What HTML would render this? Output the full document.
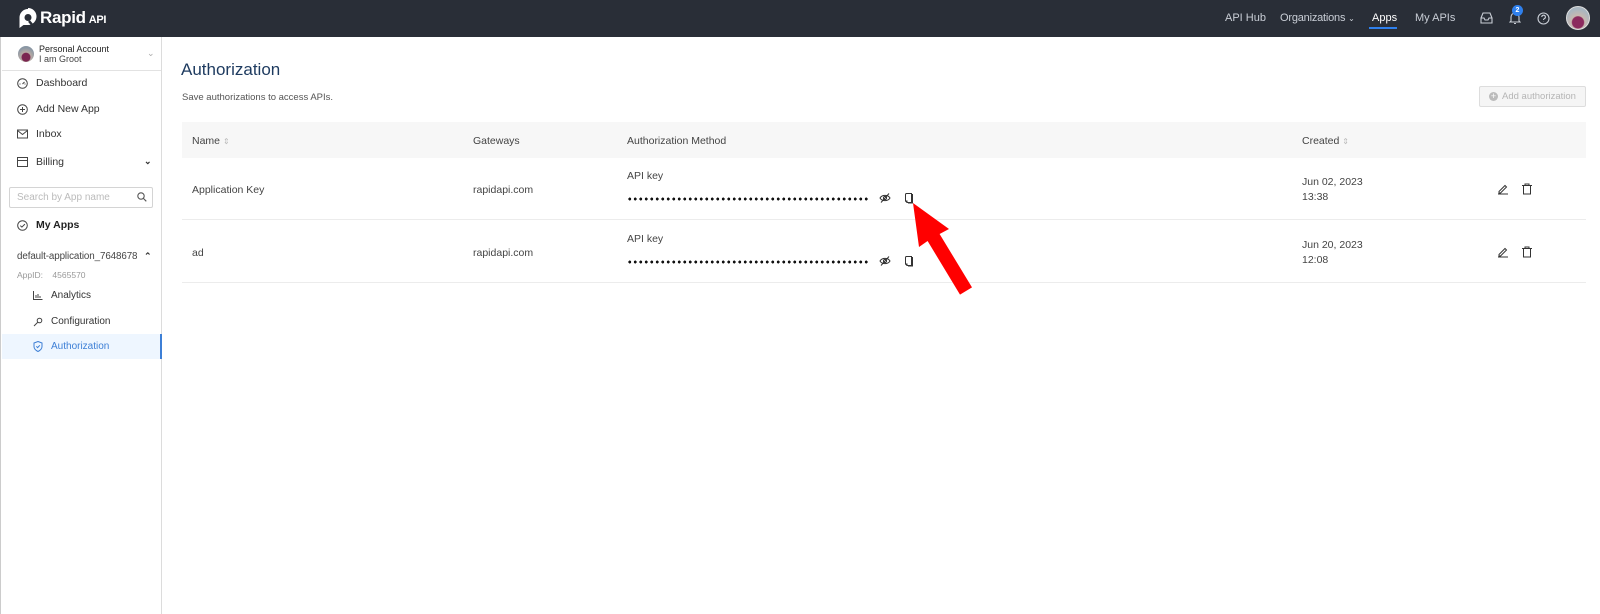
<!DOCTYPE html>
<html><head><meta charset="utf-8">
<style>
*{box-sizing:border-box;margin:0;padding:0}
body{width:1600px;height:614px;overflow:hidden;background:#fff;font-family:"Liberation Sans",sans-serif;color:#333;position:relative;font-size:11px}
.top{position:absolute;left:0;top:0;width:1600px;height:37px;background:#292e37}
.abs{position:absolute;white-space:nowrap}
.nav{color:#c9ced6;font-size:11px;top:12px}
.side{position:absolute;left:0;top:37px;width:162px;height:577px;border-right:1px solid #dcdcdc;border-left:1px solid #ccc}
.si{position:absolute;left:16px;font-size:10.5px;color:#333;display:flex;align-items:center;gap:8px}
.hdr{position:absolute;left:182px;top:122px;width:1404px;height:36px;background:#f7f7f7}
.line{position:absolute;left:182px;width:1404px;height:1px;background:#ececec}
.t{position:absolute;font-size:10.5px;color:#444;white-space:nowrap}
.dots{position:absolute;width:242px;height:4px;background:radial-gradient(circle,#111 1.3px,transparent 1.6px) 0 0/5.5px 4px repeat-x}
</style></head><body>
<div class="top"></div>
<svg class="abs" style="left:18px;top:8px" width="20" height="22" viewBox="0 0 20 22"><path d="M10 1a8.5 8.5 0 0 0-8.5 8.5V20l4-3h4.5a8.5 8.5 0 0 0 0-17z" fill="#fff"/><circle cx="10" cy="9.5" r="3.5" fill="#292e37"/><path d="M11 13l5 6" stroke="#292e37" stroke-width="2.5"/></svg>
<div class="abs" style="left:40px;top:8px;color:#fff;font-size:17px;font-weight:bold;letter-spacing:-0.3px">Rapid<span style="font-size:11px;margin-left:3px">API</span></div>
<div class="abs nav" style="left:1225px">API Hub</div>
<div class="abs nav" style="left:1280px;letter-spacing:-0.2px">Organizations <span style="font-size:8px">&#8964;</span></div>
<div class="abs nav" style="left:1372px;color:#fff">Apps</div>
<div class="abs" style="left:1369px;top:27px;width:28px;height:2px;background:#2f80ed"></div>
<div class="abs nav" style="left:1415px">My APIs</div>
<svg class="abs" style="left:1480px;top:12px" width="13" height="12" viewBox="0 0 13 12" fill="none" stroke="#c9ced6" stroke-width="1.1"><path d="M1 6l2-5h7l2 5v5H1z M1 6h3l1 2h3l1-2h3"/></svg>
<svg class="abs" style="left:1509px;top:11px" width="12" height="14" viewBox="0 0 12 14" fill="none" stroke="#c9ced6" stroke-width="1.1"><path d="M2 10V6a4 4 0 0 1 8 0v4l1 1H1z M5 12.5h2"/></svg>
<div class="abs" style="left:1512px;top:5px;width:11px;height:11px;border-radius:50%;background:#2f80ed;color:#fff;font-size:7px;text-align:center;line-height:11px;font-weight:bold">2</div>
<svg class="abs" style="left:1537px;top:12px" width="13" height="13" viewBox="0 0 13 13" fill="none" stroke="#c9ced6" stroke-width="1.1"><circle cx="6.5" cy="6.5" r="5.5"/><path d="M4.8 5a1.8 1.8 0 1 1 2.4 1.7c-.6.3-.7.7-.7 1.3M6.5 9.5v.3"/></svg>
<div class="abs" style="left:1566px;top:6px;width:24px;height:24px;border-radius:50%;background:radial-gradient(circle at 50% 70%,#8b2a5e 30%,#c8b8b0 35%,#a9b6c0 70%);border:1px solid #ddd"></div>

<div class="side">
<div class="abs" style="left:17px;top:9px;width:16px;height:16px;border-radius:50%;background:radial-gradient(circle at 50% 70%,#7a2550 30%,#b9aba4 35%,#8a97a4 70%)"></div>
<div class="abs" style="left:38px;top:7px;font-size:9px;color:#222">Personal Account</div>
<div class="abs" style="left:38px;top:17px;font-size:9px;color:#444">I am Groot</div>
<div class="abs" style="left:146px;top:11px;color:#aaa;font-size:9px">&#8964;</div>
<div class="abs" style="left:1px;top:33px;width:159px;height:1px;background:#e2e2e2"></div>
<div class="si" style="top:40px"><svg width="11" height="11" viewBox="0 0 11 11" fill="none" stroke="#444"><circle cx="5.5" cy="5.5" r="4.8"/><path d="M5.5 6l2-2M2.5 6h1M7.5 6h1"/></svg>Dashboard</div>
<div class="si" style="top:66px"><svg width="11" height="11" viewBox="0 0 11 11" fill="none" stroke="#444"><circle cx="5.5" cy="5.5" r="4.8"/><path d="M5.5 3v5M3 5.5h5"/></svg>Add New App</div>
<div class="si" style="top:91px"><svg width="11" height="10" viewBox="0 0 11 10" fill="none" stroke="#444"><rect x=".5" y="1" width="10" height="8"/><path d="M.5 1.5l5 4 5-4"/></svg>Inbox</div>
<div class="si" style="top:119px"><svg width="11" height="10" viewBox="0 0 11 10" fill="none" stroke="#444"><rect x=".5" y=".5" width="10" height="9"/><path d="M.5 3.5h10"/></svg>Billing</div>
<div class="abs" style="left:143px;top:119px;font-size:9px;font-weight:bold">&#8964;</div>
<div class="abs" style="left:8px;top:150px;width:144px;height:21px;border:1px solid #d4d4d4;border-radius:2px"></div>
<div class="abs" style="left:16px;top:155px;font-size:10px;color:#bbb">Search by App name</div>
<svg class="abs" style="left:136px;top:155px" width="10" height="10" viewBox="0 0 10 10" fill="none" stroke="#555" stroke-width="1.1"><circle cx="4" cy="4" r="3.2"/><path d="M6.4 6.4L9.3 9.3"/></svg>
<div class="si" style="top:182px;font-weight:bold;color:#222"><svg width="11" height="11" viewBox="0 0 11 11" fill="none" stroke="#444"><circle cx="5.5" cy="5.5" r="4.8"/><path d="M3.3 5.6l1.6 1.5 3-3"/></svg>My Apps</div>
<div class="abs" style="left:16px;top:214px;font-size:9.8px;color:#444;letter-spacing:-0.1px">default-application_7648678</div>
<div class="abs" style="left:143px;top:214px;font-size:9px;font-weight:bold">&#8963;</div>
<div class="abs" style="left:16px;top:233px;font-size:8.5px;color:#999">AppID: &nbsp;&nbsp;&nbsp;4565570</div>
<div class="si" style="left:32px;top:253px;font-size:10px"><svg width="10" height="9" viewBox="0 0 10 9" fill="none" stroke="#444"><path d="M.5 0v8.5h9M3 7V4M5 7V3M7 7V5"/></svg>Analytics</div>
<div class="si" style="left:32px;top:279px;font-size:10px"><svg width="10" height="10" viewBox="0 0 10 10" fill="none" stroke="#444"><circle cx="6.5" cy="3.5" r="2.3"/><path d="M5 5L1 9"/></svg>Configuration</div>
<div class="abs" style="left:1px;top:297px;width:160px;height:25px;background:#eef6ff;border-right:2px solid #3d7fd6"></div>
<div class="si" style="left:32px;top:304px;font-size:10px;color:#3d7fd6"><svg width="10" height="11" viewBox="0 0 10 11" fill="none" stroke="#3d7fd6"><path d="M5 .5l4 1.5v3.5c0 2.5-2 4-4 5-2-1-4-2.5-4-5V2z M3.3 5.3l1.3 1.3 2.2-2.3"/></svg>Authorization</div>
</div>

<div class="abs" style="left:181px;top:60px;font-size:17px;color:#1d3a5f">Authorization</div>
<div class="abs" style="left:182px;top:92px;font-size:9.5px;color:#555">Save authorizations to access APIs.</div>
<div class="abs" style="left:1479px;top:86px;width:107px;height:21px;border:1px solid #ddd;background:#f5f5f5;border-radius:2px"></div>
<div class="abs" style="left:1489px;top:92px;width:9px;height:9px;border-radius:50%;background:#bbb;color:#fff;font-size:9px;line-height:9px;text-align:center">+</div>
<div class="abs" style="left:1502px;top:91px;font-size:9.5px;color:#b5b5b5">Add authorization</div>

<div class="hdr"></div>
<div class="t" style="left:192px;top:135px">Name <span style="color:#bbb;font-size:8px">&#8661;</span></div>
<div class="t" style="left:473px;top:135px">Gateways</div>
<div class="t" style="left:627px;top:135px">Authorization Method</div>
<div class="t" style="left:1302px;top:135px">Created <span style="color:#bbb;font-size:8px">&#8661;</span></div>

<div class="t" style="left:192px;top:184px">Application Key</div>
<div class="t" style="left:473px;top:184px">rapidapi.com</div>
<div class="t" style="left:627px;top:170px">API key</div>
<div class="dots" style="left:627px;top:197px"></div>
<div class="t" style="left:1302px;top:176px">Jun 02, 2023</div>
<div class="t" style="left:1302px;top:191px">13:38</div>
<div class="line" style="top:219px"></div>

<div class="t" style="left:192px;top:247px">ad</div>
<div class="t" style="left:473px;top:247px">rapidapi.com</div>
<div class="t" style="left:627px;top:233px">API key</div>
<div class="dots" style="left:627px;top:260px"></div>
<div class="t" style="left:1302px;top:239px">Jun 20, 2023</div>
<div class="t" style="left:1302px;top:254px">12:08</div>
<div class="line" style="top:282px"></div>

<svg width="0" height="0" style="position:absolute"><defs>
<g id="eye"><path d="M1 5c2-3.5 8-3.5 10 0c-2 3.5-8 3.5-10 0z" fill="none" stroke="#333"/><circle cx="6" cy="5" r="1.6" fill="none" stroke="#333"/><path d="M2 9.5L10 .5" stroke="#333"/></g>
<g id="copy"><path d="M3 1.5h5.5v9H4L2.5 9V2.5z M4 10.5V9H2.5" fill="none" stroke="#333"/><path d="M8.5 2.5h1v8.5H5" fill="none" stroke="#333"/></g>
<g id="pen"><path d="M2 8.5l6-6 1.5 1.5-6 6H2z M1 11h10" fill="none" stroke="#333"/></g>
<g id="bin"><path d="M1 2.5h10M4 2.5V1h4v1.5M2.5 2.5V11h7V2.5" fill="none" stroke="#333"/></g>
</defs></svg>
<svg class="abs" style="left:879px;top:193px" width="12" height="11"><use href="#eye"/></svg>
<svg class="abs" style="left:903px;top:192px" width="12" height="12"><use href="#copy"/></svg>
<svg class="abs" style="left:879px;top:256px" width="12" height="11"><use href="#eye"/></svg>
<svg class="abs" style="left:903px;top:255px" width="12" height="12"><use href="#copy"/></svg>
<svg class="abs" style="left:1497px;top:183px" width="12" height="12"><use href="#pen"/></svg>
<svg class="abs" style="left:1521px;top:183px" width="12" height="12"><use href="#bin"/></svg>
<svg class="abs" style="left:1497px;top:246px" width="12" height="12"><use href="#pen"/></svg>
<svg class="abs" style="left:1521px;top:246px" width="12" height="12"><use href="#bin"/></svg>

<svg class="abs" style="left:0;top:0" width="1600" height="614"><polygon points="913,203 949,229 939.6,234 972,287.4 960,294.6 927.6,241 919,247" fill="#f00"/></svg>
</body></html>
